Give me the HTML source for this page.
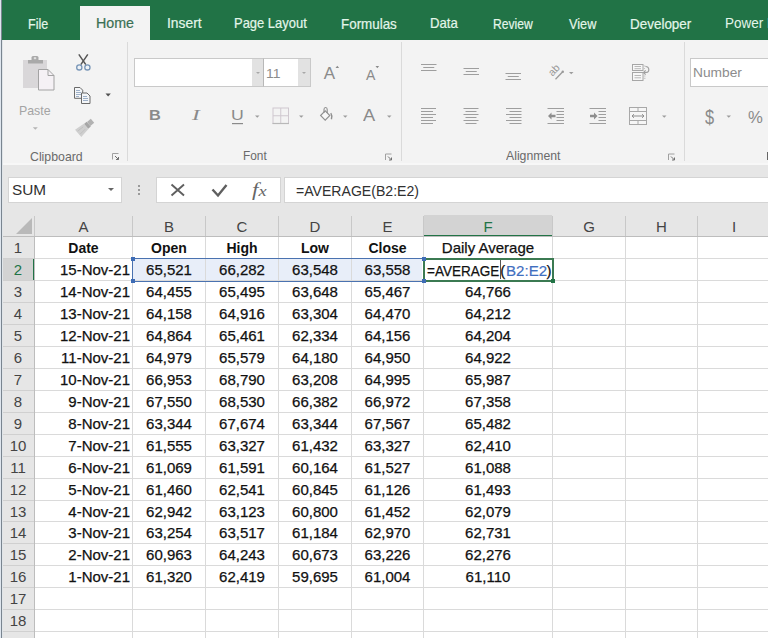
<!DOCTYPE html><html><head><meta charset="utf-8"><style>
*{margin:0;padding:0;box-sizing:border-box}
html,body{width:768px;height:638px;overflow:hidden;background:#fff}
body{position:relative;font-family:"Liberation Sans",sans-serif}
.a{position:absolute}
.t{position:absolute;white-space:nowrap;line-height:1}
.tab{color:#e4f6ea;font-size:14.5px;top:16px}
.grp{color:#5e5e5e;font-size:13px;top:150px}
.cell{font-size:15px;color:#111;-webkit-text-stroke:0.25px #111}
.hdr{font-size:15px;color:#2e2e2e}
</style></head><body>
<div class="a" style="left:0;top:0;width:768px;height:40px;background:#217346"></div>
<div class="a" style="left:80px;top:6px;width:70px;height:35px;background:#f3f3f3"></div>
<div class='t' style='left:28.14px;top:16.60px;font-size:14.5px;font-weight:400;color:#e4f6ea;transform:scaleX(0.8636);transform-origin:0 0;-webkit-text-stroke:0.2px #e4f6ea'>File</div>
<div class='t' style='left:95.82px;top:15.60px;font-size:14.5px;font-weight:400;color:#3b7054;transform:scaleX(0.9838);transform-origin:0 0;-webkit-text-stroke:0.2px #3b7054'>Home</div>
<div class='t' style='left:166.65px;top:15.60px;font-size:14.5px;font-weight:400;color:#e4f6ea;transform:scaleX(0.9543);transform-origin:0 0;-webkit-text-stroke:0.2px #e4f6ea'>Insert</div>
<div class='t' style='left:234.21px;top:15.60px;font-size:14.5px;font-weight:400;color:#e4f6ea;transform:scaleX(0.8938);transform-origin:0 0;-webkit-text-stroke:0.2px #e4f6ea'>Page Layout</div>
<div class='t' style='left:340.68px;top:16.60px;font-size:14.5px;font-weight:400;color:#e4f6ea;transform:scaleX(0.9237);transform-origin:0 0;-webkit-text-stroke:0.2px #e4f6ea'>Formulas</div>
<div class='t' style='left:430.39px;top:15.60px;font-size:14.5px;font-weight:400;color:#e4f6ea;transform:scaleX(0.9067);transform-origin:0 0;-webkit-text-stroke:0.2px #e4f6ea'>Data</div>
<div class='t' style='left:493.06px;top:16.60px;font-size:14.5px;font-weight:400;color:#e4f6ea;transform:scaleX(0.8383);transform-origin:0 0;-webkit-text-stroke:0.2px #e4f6ea'>Review</div>
<div class='t' style='left:568.60px;top:16.60px;font-size:14.5px;font-weight:400;color:#e4f6ea;transform:scaleX(0.8774);transform-origin:0 0;-webkit-text-stroke:0.2px #e4f6ea'>View</div>
<div class='t' style='left:629.77px;top:16.60px;font-size:14.5px;font-weight:400;color:#e4f6ea;transform:scaleX(0.9277);transform-origin:0 0;-webkit-text-stroke:0.2px #e4f6ea'>Developer</div>
<div class='t' style='left:724.80px;top:15.60px;font-size:14.5px;font-weight:400;color:#e4f6ea;transform:scaleX(0.93);transform-origin:0 0'>Power P</div>
<div class="a" style="left:0;top:40px;width:768px;height:123px;background:#f3f3f3"></div>
<div class="a" style="left:0;top:163px;width:768px;height:2px;background:#f7f7f7"></div>
<div class="a" style="left:767px;top:152px;width:1px;height:8px;background:#666"></div>
<div class="a" style="left:0;top:165px;width:768px;height:72px;background:#e6e6e6"></div>
<div class="a" style="left:127px;top:42px;width:1px;height:119px;background:#dadada"></div>
<div class="a" style="left:401px;top:42px;width:1px;height:119px;background:#dadada"></div>
<div class="a" style="left:684px;top:42px;width:1px;height:119px;background:#dadada"></div>
<div class="a" style="left:8px;top:177px;width:114px;height:26px;background:#fff;border:1px solid #d4d4d4"></div>
<div class='t' style='left:11.98px;top:182.00px;font-size:15px;font-weight:400;color:#303030;transform:scaleX(1.0226);transform-origin:0 0;'>SUM</div>
<div class="a" style="left:108px;top:188px;width:0;height:0;border-left:3px solid transparent;border-right:3px solid transparent;border-top:3px solid #666"></div>
<div class="a" style="left:138px;top:185px;width:2px;height:2px;background:#9a9a9a"></div>
<div class="a" style="left:138px;top:189px;width:2px;height:2px;background:#9a9a9a"></div>
<div class="a" style="left:138px;top:193px;width:2px;height:2px;background:#9a9a9a"></div>
<div class="a" style="left:156px;top:177px;width:125px;height:26px;background:#fff;border:1px solid #d4d4d4"></div>
<div class="a" style="left:284px;top:177px;width:490px;height:26px;background:#fff;border:1px solid #d4d4d4"></div>
<div class='t' style='left:296.22px;top:183.80px;font-size:14.3px;font-weight:400;color:#303030;transform:scaleX(0.9846);transform-origin:0 0;'>=AVERAGE(B2:E2)</div>
<svg class="a" style="left:0;top:0" width="768" height="638" viewBox="0 0 768 638"><rect x="23" y="60" width="24" height="28" fill="#d9d7d9"/><rect x="31.5" y="56" width="7" height="5" rx="1.5" fill="#a9a9a9"/><rect x="33.8" y="57.2" width="2.4" height="2" fill="#e0e0e0"/><rect x="28" y="60" width="15" height="3.5" fill="#a9a9a9"/><path d="M38.5,69.5 h9.5 l6,6 v14.5 h-15.5 z" fill="#f5f1f5" stroke="#a3a3a3" stroke-width="1"/><path d="M48,69.5 v6 h6" fill="none" stroke="#a3a3a3" stroke-width="1"/><path d="M32.8,127.2 h5 l-2.5,2.5 z" fill="#b4b4b4"/><path d="M78.8,54.3 L85.8,64.6 M87.8,54.3 L80.8,64.6" stroke="#555" stroke-width="1.5" fill="none"/><circle cx="79.3" cy="67.4" r="2.6" stroke="#7694b6" stroke-width="1.3" fill="#eef2f6"/><circle cx="87.4" cy="67.4" r="2.6" stroke="#7694b6" stroke-width="1.3" fill="#eef2f6"/><path d="M74.5,87.5 h5.5 l2.7,2.7 v8.1 h-8.2 z" fill="#f4f6f8" stroke="#6a6a6a" stroke-width="1"/><path d="M76,90.5 h4 M76,92.5 h5 M76,94.5 h5 M76,96.5 h3" stroke="#9db0c8" stroke-width="1"/><path d="M81.5,93 h5.5 l3,3 v7.5 h-8.5 z" fill="#f4f6f8" stroke="#6a6a6a" stroke-width="1"/><path d="M83,96.5 h4 M83,98.5 h5 M83,100.5 h5" stroke="#9db0c8" stroke-width="1"/><path d="M105.5,93.6 h5.3 l-2.65,2.8 z" fill="#505050"/><g transform="translate(92.5,120.8) rotate(139)"><rect x="0" y="-2.6" width="5" height="5.2" fill="#b2b2b2"/><rect x="5" y="-3.2" width="3.5" height="6.4" fill="#a6a6a6"/><path d="M8.5,-3.5 L19,-4.8 L19,4.8 L8.5,3.5 z" fill="#cfcfcf"/><path d="M11,-1.5 L18,-2 M11,1.5 L18,2" stroke="#bdbdbd" stroke-width="0.8"/></g><path d="M112.5,159.5 V153.5 H118.5" stroke="#a0a0a0" stroke-width="1" fill="none"/><path d="M115.0,156.0 L118.5,159.5 M118.5,157.0 V159.5 H116.0" stroke="#707070" stroke-width="1" fill="none"/><path d="M385.5,160 V154 H391.5" stroke="#a0a0a0" stroke-width="1" fill="none"/><path d="M388.0,156.5 L391.5,160 M391.5,157.5 V160 H389.0" stroke="#707070" stroke-width="1" fill="none"/><path d="M668.5,160 V154 H674.5" stroke="#a0a0a0" stroke-width="1" fill="none"/><path d="M671.0,156.5 L674.5,160 M674.5,157.5 V160 H672.0" stroke="#707070" stroke-width="1" fill="none"/><rect x="134.5" y="58.5" width="176" height="28" fill="#fff" stroke="#c9c9c9" stroke-width="1"/><rect x="252" y="59" width="11.5" height="27" fill="#e2e2e2"/><rect x="298" y="59" width="12" height="27" fill="#e2e2e2"/><line x1="263.5" y1="58.5" x2="263.5" y2="86.5" stroke="#b8b8b8" stroke-width="1"/><path d="M256,72 h4 l-2,2 z M302,72 h4 l-2,2 z" fill="#a8a8a8"/><path d="M335.5,68 l1.8,-2.3 l1.8,2.3 z" fill="#8a8a8a"/><path d="M375.5,66 h3.6 l-1.8,2.3 z" fill="#8a8a8a"/><line x1="232" y1="123.6" x2="243" y2="123.6" stroke="#8a8a8a" stroke-width="1.2"/><path d="M255,115.5 h4.5 l-2.25,2.3 z" fill="#9c9c9c"/><path d="M299,115.5 h4.5 l-2.25,2.3 z" fill="#9c9c9c"/><path d="M343,115.5 h4.5 l-2.25,2.3 z" fill="#9c9c9c"/><path d="M387,115.5 h4.5 l-2.25,2.3 z" fill="#9c9c9c"/><path d="M569,72 h4.5 l-2.25,2.3 z" fill="#9c9c9c"/><path d="M662,115.5 h4.5 l-2.25,2.3 z" fill="#9c9c9c"/><path d="M726.5,115.5 h4.5 l-2.25,2.3 z" fill="#9c9c9c"/><rect x="273" y="108" width="15.5" height="15.5" fill="none" stroke="#cfc8cf" stroke-width="1"/><path d="M280.75,108 V123.5 M273,115.75 H288.5" stroke="#cfc8cf" stroke-width="1"/><line x1="272.5" y1="123.5" x2="289" y2="123.5" stroke="#b8b8b8" stroke-width="1.2"/><path d="M320.6,115.5 L325.2,110.9 L329.8,115.5 L325.2,120.1 z" fill="#f7f7f7" stroke="#8f8f8f" stroke-width="1.1"/><path d="M324,113 V109.5 q0,-2 1.6,-2 q1.6,0 1.6,2 V113" fill="none" stroke="#8f8f8f" stroke-width="1.1"/><path d="M330.8,113.2 q1.8,2.8 0.6,6" fill="none" stroke="#8f8f8f" stroke-width="1.4"/><line x1="421.0" y1="64.5" x2="436.5" y2="64.5" stroke="#9e9e9e" stroke-width="1"/><line x1="423.25" y1="67.5" x2="434.25" y2="67.5" stroke="#9e9e9e" stroke-width="1"/><line x1="421.0" y1="70.5" x2="436.5" y2="70.5" stroke="#9e9e9e" stroke-width="1"/><line x1="463.5" y1="68.5" x2="479.0" y2="68.5" stroke="#9e9e9e" stroke-width="1"/><line x1="465.75" y1="71.5" x2="476.75" y2="71.5" stroke="#9e9e9e" stroke-width="1"/><line x1="463.5" y1="74.5" x2="479.0" y2="74.5" stroke="#9e9e9e" stroke-width="1"/><line x1="505.5" y1="73.5" x2="521.0" y2="73.5" stroke="#9e9e9e" stroke-width="1"/><line x1="507.75" y1="76.5" x2="518.75" y2="76.5" stroke="#9e9e9e" stroke-width="1"/><line x1="505.5" y1="79.5" x2="521.0" y2="79.5" stroke="#9e9e9e" stroke-width="1"/><line x1="421" y1="108.5" x2="436" y2="108.5" stroke="#9e9e9e" stroke-width="1"/><line x1="421" y1="111.5" x2="433" y2="111.5" stroke="#9e9e9e" stroke-width="1"/><line x1="421" y1="114.5" x2="436" y2="114.5" stroke="#9e9e9e" stroke-width="1"/><line x1="421" y1="117.5" x2="433" y2="117.5" stroke="#9e9e9e" stroke-width="1"/><line x1="421" y1="120.5" x2="436" y2="120.5" stroke="#9e9e9e" stroke-width="1"/><line x1="421" y1="123.5" x2="433" y2="123.5" stroke="#9e9e9e" stroke-width="1"/><line x1="463.5" y1="108.5" x2="478.5" y2="108.5" stroke="#9e9e9e" stroke-width="1"/><line x1="465.5" y1="111.5" x2="476.5" y2="111.5" stroke="#9e9e9e" stroke-width="1"/><line x1="463.5" y1="114.5" x2="478.5" y2="114.5" stroke="#9e9e9e" stroke-width="1"/><line x1="465.5" y1="117.5" x2="476.5" y2="117.5" stroke="#9e9e9e" stroke-width="1"/><line x1="463.5" y1="120.5" x2="478.5" y2="120.5" stroke="#9e9e9e" stroke-width="1"/><line x1="465.5" y1="123.5" x2="476.5" y2="123.5" stroke="#9e9e9e" stroke-width="1"/><line x1="506.0" y1="108.5" x2="521.5" y2="108.5" stroke="#9e9e9e" stroke-width="1"/><line x1="509.5" y1="111.5" x2="521.5" y2="111.5" stroke="#9e9e9e" stroke-width="1"/><line x1="506.0" y1="114.5" x2="521.5" y2="114.5" stroke="#9e9e9e" stroke-width="1"/><line x1="509.5" y1="117.5" x2="521.5" y2="117.5" stroke="#9e9e9e" stroke-width="1"/><line x1="506.0" y1="120.5" x2="521.5" y2="120.5" stroke="#9e9e9e" stroke-width="1"/><line x1="509.5" y1="123.5" x2="521.5" y2="123.5" stroke="#9e9e9e" stroke-width="1"/><line x1="547.5" y1="108.5" x2="564.0" y2="108.5" stroke="#9e9e9e" stroke-width="1"/><line x1="547.5" y1="123.5" x2="564.0" y2="123.5" stroke="#9e9e9e" stroke-width="1"/><line x1="556.5" y1="111.5" x2="564.0" y2="111.5" stroke="#9e9e9e" stroke-width="1"/><line x1="556.5" y1="114.5" x2="564.0" y2="114.5" stroke="#9e9e9e" stroke-width="1"/><line x1="556.5" y1="117.5" x2="564.0" y2="117.5" stroke="#9e9e9e" stroke-width="1"/><line x1="556.5" y1="120.5" x2="564.0" y2="120.5" stroke="#9e9e9e" stroke-width="1"/><path d="M548.0,116 l3.5,-3.5 v2.3 h4 v2.4 h-4 v2.3 z" fill="#8e8e8e"/><line x1="589.5" y1="108.5" x2="606.0" y2="108.5" stroke="#9e9e9e" stroke-width="1"/><line x1="589.5" y1="123.5" x2="606.0" y2="123.5" stroke="#9e9e9e" stroke-width="1"/><line x1="598.5" y1="111.5" x2="606.0" y2="111.5" stroke="#9e9e9e" stroke-width="1"/><line x1="598.5" y1="114.5" x2="606.0" y2="114.5" stroke="#9e9e9e" stroke-width="1"/><line x1="598.5" y1="117.5" x2="606.0" y2="117.5" stroke="#9e9e9e" stroke-width="1"/><line x1="598.5" y1="120.5" x2="606.0" y2="120.5" stroke="#9e9e9e" stroke-width="1"/><path d="M597.5,116 l-3.5,-3.5 v2.3 h-4 v2.4 h4 v2.3 z" fill="#8e8e8e"/><rect x="629.5" y="107.5" width="17" height="17" fill="#f6f6f6" stroke="#a8a8a8" stroke-width="1"/><path d="M629.5,111.5 H646.5 M629.5,120.5 H646.5 M638,107.5 V111.5 M638,120.5 V124.5" stroke="#a8a8a8" stroke-width="1"/><path d="M632,116 H644 M632,116 l2,-1.8 M632,116 l2,1.8 M644,116 l-2,-1.8 M644,116 l-2,1.8" stroke="#8e8e8e" stroke-width="1" fill="none"/><text x="0" y="0" transform="translate(552.5,76.8) rotate(-47)" font-family="Liberation Sans" font-size="10.5" fill="#969696">ab</text><path d="M555.5,79.2 L562.5,72" stroke="#9a9a9a" stroke-width="1.3" fill="none"/><circle cx="562.8" cy="71.8" r="1.2" fill="#999"/><rect x="632.5" y="64.5" width="10.5" height="6" fill="#f7f7f7" stroke="#a6a6a6" stroke-width="1"/><rect x="632.5" y="72.5" width="10.5" height="8" fill="#f7f7f7" stroke="#a6a6a6" stroke-width="1"/><path d="M634.5,66.5 h6.5 M634.5,68.7 h6.5 M634.5,75.5 h6.5 M634.5,77.8 h6.5" stroke="#b8b8b8" stroke-width="1"/><path d="M643.5,66 h2 M643.5,68.5 h1.5 M643.5,76 h2 M643.5,78.3 h2" stroke="#c4c4c4" stroke-width="1"/><path d="M645.5,66.5 q3.3,0.3 3.3,3.2 q0,2.8 -3.3,2.8 h-1.5 M645.6,70.3 l-2,2.2 l2,2.2" stroke="#a0a0a0" stroke-width="1.2" fill="none"/><rect x="690.5" y="58.5" width="90" height="28" fill="#fff" stroke="#c9c9c9" stroke-width="1"/><path d="M171.5,184.5 L184,195.5 M184,184.5 L171.5,195.5" stroke="#5f5f5f" stroke-width="1.9" fill="none"/><path d="M212.5,189.5 L218,195.5 L226.5,185" stroke="#5f5f5f" stroke-width="2.4" fill="none" stroke-linejoin="miter"/></svg>
<div class='t' style='left:29.55px;top:150.30px;font-size:13px;font-weight:400;color:#6a6a6a;transform:scaleX(0.9463);transform-origin:0 0;'>Clipboard</div>
<div class='t' style='left:243.39px;top:149.30px;font-size:13px;font-weight:400;color:#6a6a6a;transform:scaleX(0.9120);transform-origin:0 0;'>Font</div>
<div class='t' style='left:506.40px;top:148.60px;font-size:13px;font-weight:400;color:#6a6a6a;transform:scaleX(0.9414);transform-origin:0 0;'>Alignment</div>
<div class='t' style='left:19.45px;top:104.40px;font-size:13px;font-weight:400;color:#a4a4a4;transform:scaleX(0.9500);transform-origin:0 0;'>Paste</div>
<div class='t' style='left:692.64px;top:66.00px;font-size:13px;font-weight:400;color:#8c8c8c;transform:scaleX(1.0578);transform-origin:0 0;'>Number</div>
<div class='t' style='left:265.73px;top:66.60px;font-size:13px;font-weight:400;color:#8c8c8c;transform:scaleX(1.0750);transform-origin:0 0;'>11</div>
<div class='t' style='left:323.70px;top:65.00px;font-size:17px;font-weight:400;color:#8a8a8a;'>A</div>
<div class='t' style='left:366.00px;top:68.00px;font-size:14px;font-weight:400;color:#8a8a8a;'>A</div>
<div class='t' style='left:149.11px;top:107.20px;font-size:15px;font-weight:700;color:#8a8a8a;transform:scaleX(1.0889);transform-origin:0 0;'>B</div>
<div class='t' style='left:192.30px;top:107.20px;font-size:15.5px;font-weight:400;color:#8a8a8a;transform:scaleX(1.4917);transform-origin:0 0;font-family:"Liberation Serif";font-style:italic'>I</div>
<div class='t' style='left:231.02px;top:107.20px;font-size:15px;font-weight:400;color:#8a8a8a;transform:scaleX(1.1778);transform-origin:0 0;'>U</div>
<div class='t' style='left:363.20px;top:107.30px;font-size:17px;font-weight:400;color:#8a8a8a;transform:scaleX(1.0727);transform-origin:0 0;'>A</div>
<div class='t' style='left:705.30px;top:106.70px;font-size:20px;font-weight:400;color:#8a8a8a;transform:scaleX(0.8182);transform-origin:0 0;'>$</div>
<div class='t' style='left:748.40px;top:109.70px;font-size:16px;font-weight:400;color:#8a8a8a;transform:scaleX(1.0429);transform-origin:0 0;'>%</div>
<div class='t' style='left:252.20px;top:181.00px;font-size:18px;font-weight:400;color:#666;transform:scaleX(1.2773);transform-origin:0 0;font-family:"Liberation Serif";font-style:italic'>f<span style='font-size:0.8em'>x</span></div>
<div class="a" style="left:2px;top:215px;width:766px;height:21px;background:#e6e6e6"></div>
<div class="a" style="left:2px;top:236px;width:32px;height:402px;background:#e6e6e6"></div>
<div class="a" style="left:35px;top:237px;width:733px;height:401px;background:#fff"></div>
<div class="a" style="left:424px;top:215px;width:128px;height:21px;background:#d3d3d3"></div>
<div class="a" style="left:423px;top:235px;width:130px;height:2px;background:#217346"></div>
<div class="a" style="left:2px;top:259px;width:32px;height:21px;background:#d3d3d3"></div>
<div class="a" style="left:33px;top:258px;width:2px;height:23px;background:#217346"></div>
<div class="a" style="left:133px;top:259px;width:289px;height:21px;background:#e8eef9"></div>
<div class="a" style="left:2px;top:236px;width:766px;height:1px;background:#bdbdbd"></div>
<div class="a" style="left:2px;top:258px;width:32px;height:1px;background:#d0d0d0"></div>
<div class="a" style="left:35px;top:258px;width:733px;height:1px;background:#dadada"></div>
<div class="a" style="left:2px;top:280px;width:32px;height:1px;background:#d0d0d0"></div>
<div class="a" style="left:35px;top:280px;width:733px;height:1px;background:#dadada"></div>
<div class="a" style="left:2px;top:302px;width:32px;height:1px;background:#d0d0d0"></div>
<div class="a" style="left:35px;top:302px;width:733px;height:1px;background:#dadada"></div>
<div class="a" style="left:2px;top:324px;width:32px;height:1px;background:#d0d0d0"></div>
<div class="a" style="left:35px;top:324px;width:733px;height:1px;background:#dadada"></div>
<div class="a" style="left:2px;top:346px;width:32px;height:1px;background:#d0d0d0"></div>
<div class="a" style="left:35px;top:346px;width:733px;height:1px;background:#dadada"></div>
<div class="a" style="left:2px;top:368px;width:32px;height:1px;background:#d0d0d0"></div>
<div class="a" style="left:35px;top:368px;width:733px;height:1px;background:#dadada"></div>
<div class="a" style="left:2px;top:390px;width:32px;height:1px;background:#d0d0d0"></div>
<div class="a" style="left:35px;top:390px;width:733px;height:1px;background:#dadada"></div>
<div class="a" style="left:2px;top:412px;width:32px;height:1px;background:#d0d0d0"></div>
<div class="a" style="left:35px;top:412px;width:733px;height:1px;background:#dadada"></div>
<div class="a" style="left:2px;top:434px;width:32px;height:1px;background:#d0d0d0"></div>
<div class="a" style="left:35px;top:434px;width:733px;height:1px;background:#dadada"></div>
<div class="a" style="left:2px;top:456px;width:32px;height:1px;background:#d0d0d0"></div>
<div class="a" style="left:35px;top:456px;width:733px;height:1px;background:#dadada"></div>
<div class="a" style="left:2px;top:478px;width:32px;height:1px;background:#d0d0d0"></div>
<div class="a" style="left:35px;top:478px;width:733px;height:1px;background:#dadada"></div>
<div class="a" style="left:2px;top:500px;width:32px;height:1px;background:#d0d0d0"></div>
<div class="a" style="left:35px;top:500px;width:733px;height:1px;background:#dadada"></div>
<div class="a" style="left:2px;top:521px;width:32px;height:1px;background:#d0d0d0"></div>
<div class="a" style="left:35px;top:521px;width:733px;height:1px;background:#dadada"></div>
<div class="a" style="left:2px;top:543px;width:32px;height:1px;background:#d0d0d0"></div>
<div class="a" style="left:35px;top:543px;width:733px;height:1px;background:#dadada"></div>
<div class="a" style="left:2px;top:565px;width:32px;height:1px;background:#d0d0d0"></div>
<div class="a" style="left:35px;top:565px;width:733px;height:1px;background:#dadada"></div>
<div class="a" style="left:2px;top:587px;width:32px;height:1px;background:#d0d0d0"></div>
<div class="a" style="left:35px;top:587px;width:733px;height:1px;background:#dadada"></div>
<div class="a" style="left:2px;top:609px;width:32px;height:1px;background:#d0d0d0"></div>
<div class="a" style="left:35px;top:609px;width:733px;height:1px;background:#dadada"></div>
<div class="a" style="left:2px;top:631px;width:32px;height:1px;background:#d0d0d0"></div>
<div class="a" style="left:35px;top:631px;width:733px;height:1px;background:#dadada"></div>
<div class="a" style="left:34px;top:216px;width:1px;height:20px;background:#c8c8c8"></div>
<div class="a" style="left:34px;top:237px;width:1px;height:401px;background:#bdbdbd"></div>
<div class="a" style="left:132px;top:216px;width:1px;height:20px;background:#c8c8c8"></div>
<div class="a" style="left:132px;top:237px;width:1px;height:401px;background:#dadada"></div>
<div class="a" style="left:205px;top:216px;width:1px;height:20px;background:#c8c8c8"></div>
<div class="a" style="left:205px;top:237px;width:1px;height:401px;background:#dadada"></div>
<div class="a" style="left:278px;top:216px;width:1px;height:20px;background:#c8c8c8"></div>
<div class="a" style="left:278px;top:237px;width:1px;height:401px;background:#dadada"></div>
<div class="a" style="left:351px;top:216px;width:1px;height:20px;background:#c8c8c8"></div>
<div class="a" style="left:351px;top:237px;width:1px;height:401px;background:#dadada"></div>
<div class="a" style="left:423px;top:216px;width:1px;height:20px;background:#c8c8c8"></div>
<div class="a" style="left:423px;top:237px;width:1px;height:401px;background:#dadada"></div>
<div class="a" style="left:552px;top:216px;width:1px;height:20px;background:#c8c8c8"></div>
<div class="a" style="left:552px;top:237px;width:1px;height:401px;background:#dadada"></div>
<div class="a" style="left:625px;top:216px;width:1px;height:20px;background:#c8c8c8"></div>
<div class="a" style="left:625px;top:237px;width:1px;height:401px;background:#dadada"></div>
<div class="a" style="left:697px;top:216px;width:1px;height:20px;background:#c8c8c8"></div>
<div class="a" style="left:697px;top:237px;width:1px;height:401px;background:#dadada"></div>
<div class="a" style="left:770px;top:216px;width:1px;height:20px;background:#c8c8c8"></div>
<div class="a" style="left:770px;top:237px;width:1px;height:401px;background:#dadada"></div>
<div class="t hdr" style="left:35px;width:97px;text-align:center;top:218.5px;color:#444">A</div>
<div class="t hdr" style="left:133px;width:72px;text-align:center;top:218.5px;color:#444">B</div>
<div class="t hdr" style="left:206px;width:72px;text-align:center;top:218.5px;color:#444">C</div>
<div class="t hdr" style="left:279px;width:72px;text-align:center;top:218.5px;color:#444">D</div>
<div class="t hdr" style="left:352px;width:71px;text-align:center;top:218.5px;color:#444">E</div>
<div class="t hdr" style="left:424px;width:128px;text-align:center;top:218.5px;color:#217346">F</div>
<div class="t hdr" style="left:553px;width:72px;text-align:center;top:218.5px;color:#444">G</div>
<div class="t hdr" style="left:626px;width:71px;text-align:center;top:218.5px;color:#444">H</div>
<div class="t hdr" style="left:698px;width:72px;text-align:center;top:218.5px;color:#444">I</div>
<div class="t hdr" style="left:2px;width:32px;text-align:center;top:240px;color:#444">1</div>
<div class="t hdr" style="left:2px;width:32px;text-align:center;top:262px;color:#217346">2</div>
<div class="t hdr" style="left:2px;width:32px;text-align:center;top:284px;color:#444">3</div>
<div class="t hdr" style="left:2px;width:32px;text-align:center;top:306px;color:#444">4</div>
<div class="t hdr" style="left:2px;width:32px;text-align:center;top:328px;color:#444">5</div>
<div class="t hdr" style="left:2px;width:32px;text-align:center;top:350px;color:#444">6</div>
<div class="t hdr" style="left:2px;width:32px;text-align:center;top:372px;color:#444">7</div>
<div class="t hdr" style="left:2px;width:32px;text-align:center;top:394px;color:#444">8</div>
<div class="t hdr" style="left:2px;width:32px;text-align:center;top:416px;color:#444">9</div>
<div class="t hdr" style="left:2px;width:32px;text-align:center;top:438px;color:#444">10</div>
<div class="t hdr" style="left:2px;width:32px;text-align:center;top:460px;color:#444">11</div>
<div class="t hdr" style="left:2px;width:32px;text-align:center;top:482px;color:#444">12</div>
<div class="t hdr" style="left:2px;width:32px;text-align:center;top:504px;color:#444">13</div>
<div class="t hdr" style="left:2px;width:32px;text-align:center;top:525px;color:#444">14</div>
<div class="t hdr" style="left:2px;width:32px;text-align:center;top:547px;color:#444">15</div>
<div class="t hdr" style="left:2px;width:32px;text-align:center;top:569px;color:#444">16</div>
<div class="t hdr" style="left:2px;width:32px;text-align:center;top:591px;color:#444">17</div>
<div class="t hdr" style="left:2px;width:32px;text-align:center;top:613px;color:#444">18</div>
<div class="t cell" style="left:35px;width:97px;text-align:center;top:240px;font-weight:bold;font-size:14px;-webkit-text-stroke:0;padding-top:1px">Date</div>
<div class="t cell" style="left:133px;width:72px;text-align:center;top:240px;font-weight:bold;font-size:14px;-webkit-text-stroke:0;padding-top:1px">Open</div>
<div class="t cell" style="left:206px;width:72px;text-align:center;top:240px;font-weight:bold;font-size:14px;-webkit-text-stroke:0;padding-top:1px">High</div>
<div class="t cell" style="left:279px;width:72px;text-align:center;top:240px;font-weight:bold;font-size:14px;-webkit-text-stroke:0;padding-top:1px">Low</div>
<div class="t cell" style="left:352px;width:71px;text-align:center;top:240px;font-weight:bold;font-size:14px;-webkit-text-stroke:0;padding-top:1px">Close</div>
<div class="t cell" style="left:424px;width:128px;text-align:center;top:240px">Daily Average</div>
<div class="t cell" style="left:35px;width:95px;text-align:right;top:262px">15-Nov-21</div>
<div class="t cell" style="left:133px;width:72px;text-align:center;top:262px">65,521</div>
<div class="t cell" style="left:206px;width:72px;text-align:center;top:262px">66,282</div>
<div class="t cell" style="left:279px;width:72px;text-align:center;top:262px">63,548</div>
<div class="t cell" style="left:352px;width:71px;text-align:center;top:262px">63,558</div>
<div class="t cell" style="left:35px;width:95px;text-align:right;top:284px">14-Nov-21</div>
<div class="t cell" style="left:133px;width:72px;text-align:center;top:284px">64,455</div>
<div class="t cell" style="left:206px;width:72px;text-align:center;top:284px">65,495</div>
<div class="t cell" style="left:279px;width:72px;text-align:center;top:284px">63,648</div>
<div class="t cell" style="left:352px;width:71px;text-align:center;top:284px">65,467</div>
<div class="t cell" style="left:424px;width:128px;text-align:center;top:284px">64,766</div>
<div class="t cell" style="left:35px;width:95px;text-align:right;top:306px">13-Nov-21</div>
<div class="t cell" style="left:133px;width:72px;text-align:center;top:306px">64,158</div>
<div class="t cell" style="left:206px;width:72px;text-align:center;top:306px">64,916</div>
<div class="t cell" style="left:279px;width:72px;text-align:center;top:306px">63,304</div>
<div class="t cell" style="left:352px;width:71px;text-align:center;top:306px">64,470</div>
<div class="t cell" style="left:424px;width:128px;text-align:center;top:306px">64,212</div>
<div class="t cell" style="left:35px;width:95px;text-align:right;top:328px">12-Nov-21</div>
<div class="t cell" style="left:133px;width:72px;text-align:center;top:328px">64,864</div>
<div class="t cell" style="left:206px;width:72px;text-align:center;top:328px">65,461</div>
<div class="t cell" style="left:279px;width:72px;text-align:center;top:328px">62,334</div>
<div class="t cell" style="left:352px;width:71px;text-align:center;top:328px">64,156</div>
<div class="t cell" style="left:424px;width:128px;text-align:center;top:328px">64,204</div>
<div class="t cell" style="left:35px;width:95px;text-align:right;top:350px">11-Nov-21</div>
<div class="t cell" style="left:133px;width:72px;text-align:center;top:350px">64,979</div>
<div class="t cell" style="left:206px;width:72px;text-align:center;top:350px">65,579</div>
<div class="t cell" style="left:279px;width:72px;text-align:center;top:350px">64,180</div>
<div class="t cell" style="left:352px;width:71px;text-align:center;top:350px">64,950</div>
<div class="t cell" style="left:424px;width:128px;text-align:center;top:350px">64,922</div>
<div class="t cell" style="left:35px;width:95px;text-align:right;top:372px">10-Nov-21</div>
<div class="t cell" style="left:133px;width:72px;text-align:center;top:372px">66,953</div>
<div class="t cell" style="left:206px;width:72px;text-align:center;top:372px">68,790</div>
<div class="t cell" style="left:279px;width:72px;text-align:center;top:372px">63,208</div>
<div class="t cell" style="left:352px;width:71px;text-align:center;top:372px">64,995</div>
<div class="t cell" style="left:424px;width:128px;text-align:center;top:372px">65,987</div>
<div class="t cell" style="left:35px;width:95px;text-align:right;top:394px">9-Nov-21</div>
<div class="t cell" style="left:133px;width:72px;text-align:center;top:394px">67,550</div>
<div class="t cell" style="left:206px;width:72px;text-align:center;top:394px">68,530</div>
<div class="t cell" style="left:279px;width:72px;text-align:center;top:394px">66,382</div>
<div class="t cell" style="left:352px;width:71px;text-align:center;top:394px">66,972</div>
<div class="t cell" style="left:424px;width:128px;text-align:center;top:394px">67,358</div>
<div class="t cell" style="left:35px;width:95px;text-align:right;top:416px">8-Nov-21</div>
<div class="t cell" style="left:133px;width:72px;text-align:center;top:416px">63,344</div>
<div class="t cell" style="left:206px;width:72px;text-align:center;top:416px">67,674</div>
<div class="t cell" style="left:279px;width:72px;text-align:center;top:416px">63,344</div>
<div class="t cell" style="left:352px;width:71px;text-align:center;top:416px">67,567</div>
<div class="t cell" style="left:424px;width:128px;text-align:center;top:416px">65,482</div>
<div class="t cell" style="left:35px;width:95px;text-align:right;top:438px">7-Nov-21</div>
<div class="t cell" style="left:133px;width:72px;text-align:center;top:438px">61,555</div>
<div class="t cell" style="left:206px;width:72px;text-align:center;top:438px">63,327</div>
<div class="t cell" style="left:279px;width:72px;text-align:center;top:438px">61,432</div>
<div class="t cell" style="left:352px;width:71px;text-align:center;top:438px">63,327</div>
<div class="t cell" style="left:424px;width:128px;text-align:center;top:438px">62,410</div>
<div class="t cell" style="left:35px;width:95px;text-align:right;top:460px">6-Nov-21</div>
<div class="t cell" style="left:133px;width:72px;text-align:center;top:460px">61,069</div>
<div class="t cell" style="left:206px;width:72px;text-align:center;top:460px">61,591</div>
<div class="t cell" style="left:279px;width:72px;text-align:center;top:460px">60,164</div>
<div class="t cell" style="left:352px;width:71px;text-align:center;top:460px">61,527</div>
<div class="t cell" style="left:424px;width:128px;text-align:center;top:460px">61,088</div>
<div class="t cell" style="left:35px;width:95px;text-align:right;top:482px">5-Nov-21</div>
<div class="t cell" style="left:133px;width:72px;text-align:center;top:482px">61,460</div>
<div class="t cell" style="left:206px;width:72px;text-align:center;top:482px">62,541</div>
<div class="t cell" style="left:279px;width:72px;text-align:center;top:482px">60,845</div>
<div class="t cell" style="left:352px;width:71px;text-align:center;top:482px">61,126</div>
<div class="t cell" style="left:424px;width:128px;text-align:center;top:482px">61,493</div>
<div class="t cell" style="left:35px;width:95px;text-align:right;top:504px">4-Nov-21</div>
<div class="t cell" style="left:133px;width:72px;text-align:center;top:504px">62,942</div>
<div class="t cell" style="left:206px;width:72px;text-align:center;top:504px">63,123</div>
<div class="t cell" style="left:279px;width:72px;text-align:center;top:504px">60,800</div>
<div class="t cell" style="left:352px;width:71px;text-align:center;top:504px">61,452</div>
<div class="t cell" style="left:424px;width:128px;text-align:center;top:504px">62,079</div>
<div class="t cell" style="left:35px;width:95px;text-align:right;top:525px">3-Nov-21</div>
<div class="t cell" style="left:133px;width:72px;text-align:center;top:525px">63,254</div>
<div class="t cell" style="left:206px;width:72px;text-align:center;top:525px">63,517</div>
<div class="t cell" style="left:279px;width:72px;text-align:center;top:525px">61,184</div>
<div class="t cell" style="left:352px;width:71px;text-align:center;top:525px">62,970</div>
<div class="t cell" style="left:424px;width:128px;text-align:center;top:525px">62,731</div>
<div class="t cell" style="left:35px;width:95px;text-align:right;top:547px">2-Nov-21</div>
<div class="t cell" style="left:133px;width:72px;text-align:center;top:547px">60,963</div>
<div class="t cell" style="left:206px;width:72px;text-align:center;top:547px">64,243</div>
<div class="t cell" style="left:279px;width:72px;text-align:center;top:547px">60,673</div>
<div class="t cell" style="left:352px;width:71px;text-align:center;top:547px">63,226</div>
<div class="t cell" style="left:424px;width:128px;text-align:center;top:547px">62,276</div>
<div class="t cell" style="left:35px;width:95px;text-align:right;top:569px">1-Nov-21</div>
<div class="t cell" style="left:133px;width:72px;text-align:center;top:569px">61,320</div>
<div class="t cell" style="left:206px;width:72px;text-align:center;top:569px">62,419</div>
<div class="t cell" style="left:279px;width:72px;text-align:center;top:569px">59,695</div>
<div class="t cell" style="left:352px;width:71px;text-align:center;top:569px">61,004</div>
<div class="t cell" style="left:424px;width:128px;text-align:center;top:569px">61,110</div>
<div class="a" style="left:132px;top:257.5px;width:292px;height:24px;border:1.5px solid #4a72b0;border-right:none"></div>
<div class="a" style="left:423px;top:257.5px;width:130.5px;height:24px;border:2px solid #3b7a52"></div>
<div class="a" style="left:130.5px;top:256.5px;width:4px;height:4px;background:#3e6cb5"></div>
<div class="a" style="left:130.5px;top:278.5px;width:4px;height:4px;background:#3e6cb5"></div>
<div class="a" style="left:421.5px;top:256.5px;width:4px;height:4px;background:#3e6cb5"></div>
<div class="a" style="left:421.5px;top:278.5px;width:4px;height:4px;background:#3e6cb5"></div>
<div class="a" style="left:550.5px;top:278.5px;width:4px;height:4px;background:#217346"></div>
<div class='t' style='left:427.30px;top:263.00px;font-size:15px;font-weight:400;color:#111;transform:scaleX(0.9000);transform-origin:0 0;-webkit-text-stroke:0.25px #111'>=AVERAGE</div>
<div class='t' style='left:500.20px;top:263.00px;font-size:15px;font-weight:400;color:#111;-webkit-text-stroke:0.25px #111'>(</div>
<div class='t' style='left:505.59px;top:263.00px;font-size:15px;font-weight:400;color:#3f6fbf;transform:scaleX(1.0051);transform-origin:0 0;-webkit-text-stroke:0.2px #3f6fbf'>B2:E2</div>
<div class='t' style='left:546.50px;top:263.00px;font-size:15px;font-weight:400;color:#111;-webkit-text-stroke:0.25px #111'>)</div>
<div class="a" style="left:500px;top:260px;width:1px;height:19px;background:#555"></div>
<svg class="a" style="left:0;top:0" width="40" height="240"><path d="M16,234 L32,218 V234 z" fill="#b9b9b9"/></svg>
<div class="a" style="left:0;top:0;width:1px;height:638px;background:#dfe6ee"></div>
<div class="a" style="left:1px;top:0;width:1px;height:638px;background:#7a8590"></div>
<div class="a" style="left:2px;top:40px;width:1px;height:598px;background:#e0e5e9"></div>
</body></html>
